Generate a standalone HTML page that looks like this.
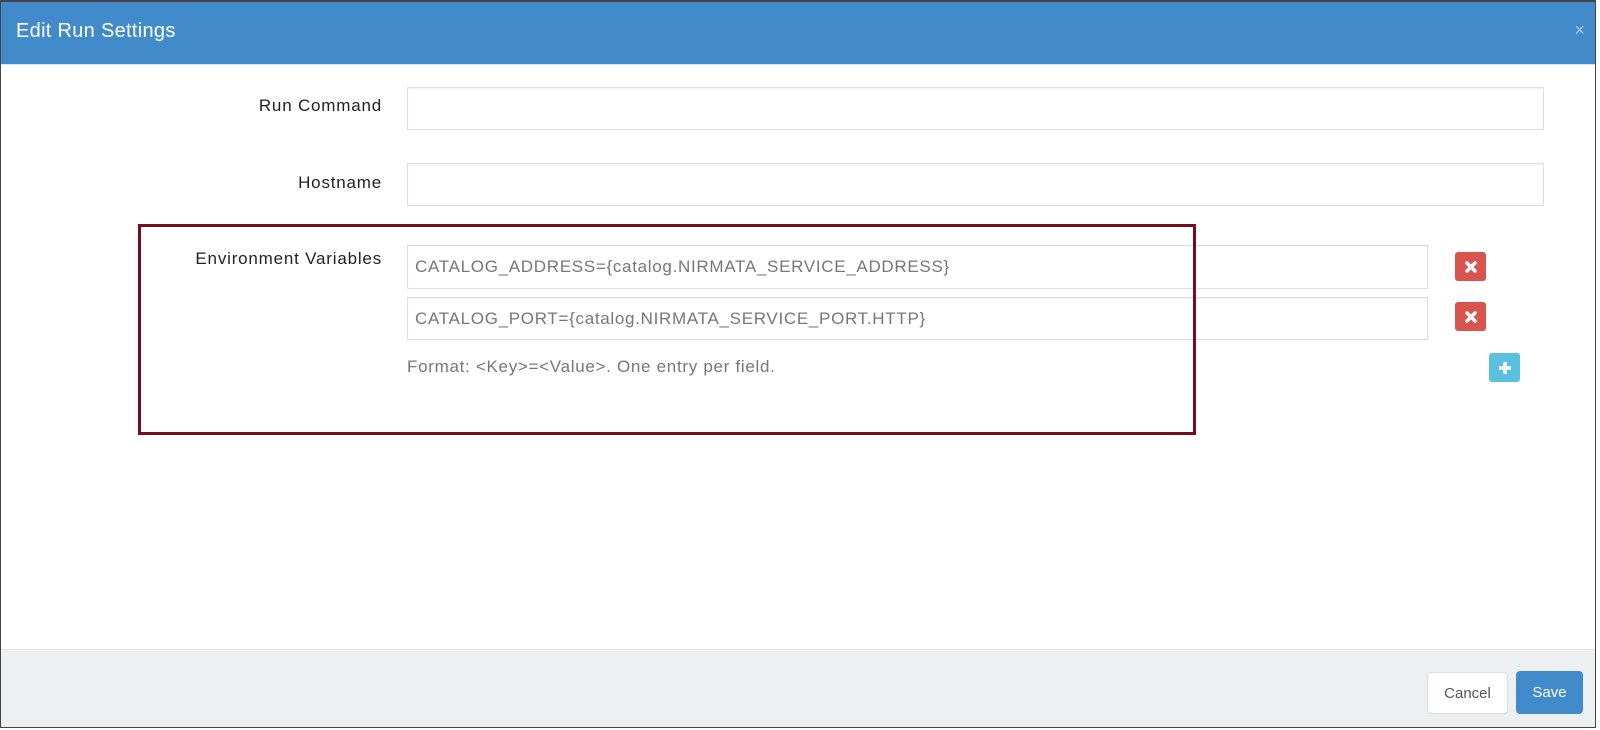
<!DOCTYPE html>
<html><head><style>
*{margin:0;padding:0;box-sizing:border-box}
body{width:1600px;height:730px;background:#fff;font-family:"Liberation Sans",sans-serif;position:relative;overflow:hidden}
.frame{position:absolute;left:0;top:0;width:1596px;height:728px;border:1px solid #444;border-top:2px solid #444}
.hdr{position:absolute;left:1px;top:2px;width:1594px;height:63px;background:#428bca;border-bottom:1px solid #d8e4ee}
.hdr h1{position:absolute;left:15px;top:18px;font-size:20px;font-weight:normal;color:#fff;letter-spacing:0.3px}
.x{position:absolute;right:10px;top:18px;color:#a9c6e3;font-size:18px}
.lbl{position:absolute;right:1218px;font-size:17px;letter-spacing:0.8px;color:#222;text-align:right}
.in{position:absolute;border:1px solid #ddd;box-shadow:inset 0 1px 1px rgba(0,0,0,.05);font-size:17px;letter-spacing:0.7px;color:#777;padding:11px 7px}
.btn{position:absolute;width:31px;height:29px;border-radius:3px;color:#fff;display:flex;align-items:center;justify-content:center}
.red{position:absolute;left:138px;top:224px;width:1058px;height:211px;border:3px solid #7a0a1e}
.ft{position:absolute;left:1px;top:649px;width:1594px;height:78px;background:#ecf0f1;border-top:1px solid #e2e6e8}
.b{position:absolute;border-radius:4px;font-size:15px;display:flex;align-items:center;justify-content:center}
</style></head><body>
<div class="frame"></div>
<div class="hdr"><h1>Edit Run Settings</h1><div class="x">×</div></div>
<div class="lbl" style="top:96px">Run Command</div>
<div class="in" style="left:407px;top:87px;width:1137px;height:43px"></div>
<div class="lbl" style="top:173px">Hostname</div>
<div class="in" style="left:407px;top:163px;width:1137px;height:43px"></div>
<div class="lbl" style="top:249px">Environment Variables</div>
<div class="in" style="left:407px;top:245px;width:1021px;height:44px">CATALOG_ADDRESS={catalog.NIRMATA_SERVICE_ADDRESS}</div>
<div class="in" style="left:407px;top:297px;width:1021px;height:43px">CATALOG_PORT={catalog.NIRMATA_SERVICE_PORT.HTTP}</div>
<div style="position:absolute;left:407px;top:357px;font-size:17px;letter-spacing:0.7px;color:#777">Format: &lt;Key&gt;=&lt;Value&gt;. One entry per field.</div>
<div class="btn" style="left:1455px;top:252px;background:#d9534f"><svg width="14" height="14" viewBox="0 0 14 14"><path d="M3 3L11 11M11 3L3 11" stroke="#fff" stroke-width="3.5" stroke-linecap="round"/></svg></div>
<div class="btn" style="left:1455px;top:302px;background:#d9534f"><svg width="14" height="14" viewBox="0 0 14 14"><path d="M3 3L11 11M11 3L3 11" stroke="#fff" stroke-width="3.5" stroke-linecap="round"/></svg></div>
<div class="btn" style="left:1489px;top:353px;background:#5bc0de"><svg width="14" height="14" viewBox="0 0 14 14"><path d="M7 1V13M1 7H13" stroke="#fff" stroke-width="3.5"/></svg></div>
<div class="red"></div>
<div class="ft"></div>
<div class="b" style="left:1427px;top:672px;width:81px;height:42px;background:#fff;border:1px solid #ddd;color:#555">Cancel</div>
<div class="b" style="left:1516px;top:671px;width:67px;height:43px;background:#428bca;color:#fff">Save</div>
</body></html>
